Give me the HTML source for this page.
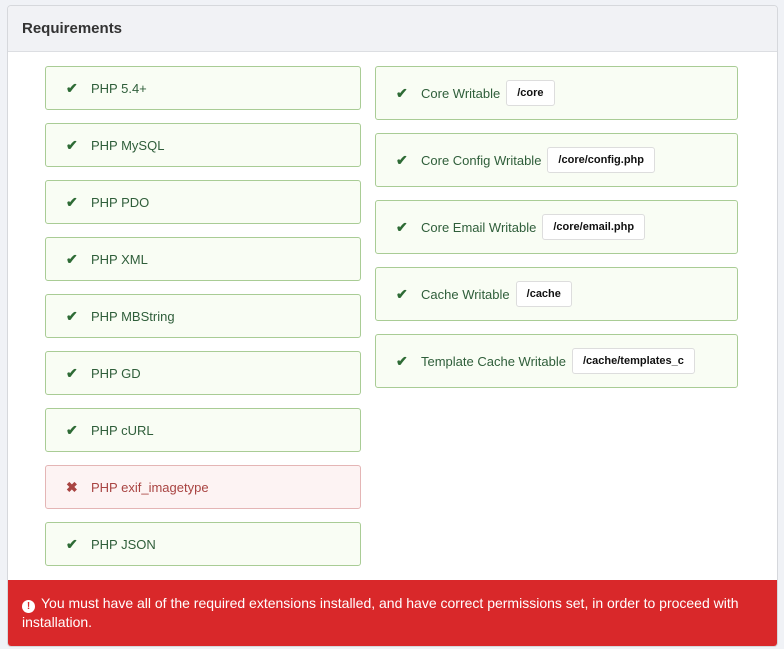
<!DOCTYPE html>
<html><head><meta charset="utf-8"><style>
body{margin:0;width:784px;height:649px;background:#f0f2f6;font-family:"Liberation Sans",sans-serif;position:relative;overflow:hidden}
.panel{position:absolute;left:7px;top:5px;width:769px;height:640px;background:#fff;border:1px solid #d6d8dc;border-radius:4px;overflow:hidden}
.hd{height:45px;background:#f1f2f5;border-bottom:1px solid #dcdee2;font-size:15px;font-weight:bold;color:#333;line-height:45px;padding-left:14px}
.it{position:absolute;box-sizing:border-box;background:#f9fdf4;border:1px solid #a9cc95;border-radius:3px;color:#2f5e3a;font-size:13px;display:flex;align-items:center;padding-left:20px}
.it .ic{width:25px;color:#2e6b35;font-size:14px;font-weight:bold}
.l{left:37px;width:316px;height:44px}
.r{left:367px;width:363px;height:54px}
.bad{background:#fdf3f3;border-color:#e4b5b5;color:#a94442}
.bad .ic{color:#a94442}
code{font-family:"Liberation Sans",sans-serif;font-size:11px;font-weight:bold;color:#111;background:#fff;border:1px solid #ddd;border-radius:3px;padding:6px 10px;margin-left:6px}
.err{position:absolute;left:0;top:574px;width:769px;height:66px;background:#d9282a;color:#fff;font-size:14px;line-height:19px;box-sizing:border-box;padding:14px 14px 0 14px}
.ex{display:inline-block;width:13px;height:13px;border-radius:50%;background:#fff;color:#d9282a;font-size:10px;font-weight:bold;text-align:center;line-height:13px;margin-right:6px;vertical-align:-1px}
</style></head><body>
<div class="panel">
<div class="hd">Requirements</div>
<div class="it l" style="top:60px"><span class="ic">✔</span>PHP 5.4+</div>
<div class="it l" style="top:117px"><span class="ic">✔</span>PHP MySQL</div>
<div class="it l" style="top:174px"><span class="ic">✔</span>PHP PDO</div>
<div class="it l" style="top:231px"><span class="ic">✔</span>PHP XML</div>
<div class="it l" style="top:288px"><span class="ic">✔</span>PHP MBString</div>
<div class="it l" style="top:345px"><span class="ic">✔</span>PHP GD</div>
<div class="it l" style="top:402px"><span class="ic">✔</span>PHP cURL</div>
<div class="it l bad" style="top:459px"><span class="ic">✖</span>PHP exif_imagetype</div>
<div class="it l" style="top:516px"><span class="ic">✔</span>PHP JSON</div>
<div class="it r" style="top:60px"><span class="ic">✔</span>Core Writable<code>/core</code></div>
<div class="it r" style="top:127px"><span class="ic">✔</span>Core Config Writable<code>/core/config.php</code></div>
<div class="it r" style="top:194px"><span class="ic">✔</span>Core Email Writable<code>/core/email.php</code></div>
<div class="it r" style="top:261px"><span class="ic">✔</span>Cache Writable<code>/cache</code></div>
<div class="it r" style="top:328px"><span class="ic">✔</span>Template Cache Writable<code>/cache/templates_c</code></div>
<div class="err"><span class="ex">!</span>You must have all of the required extensions installed, and have correct permissions set, in order to proceed with installation.</div>
</div>
</body></html>
